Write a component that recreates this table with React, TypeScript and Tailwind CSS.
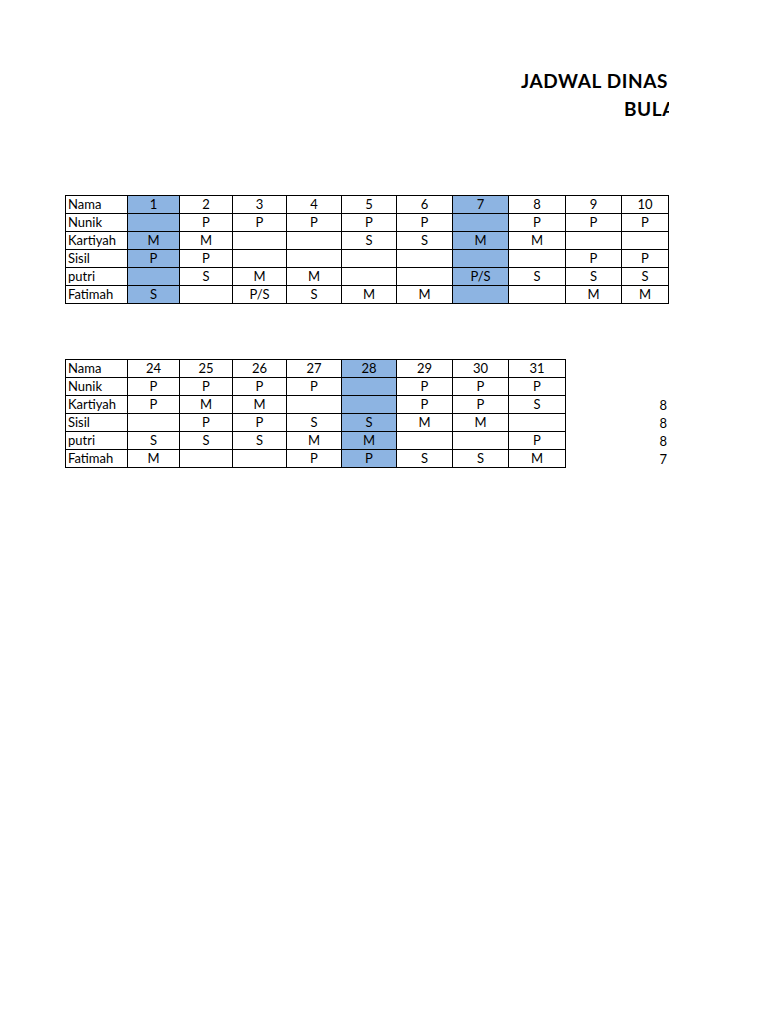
import React from 'react';

type Table = {
  days: string[];
  blue: number[];
  rows: { name: string; cells: string[]; total?: string }[];
};

const first: Table = {
  days: ['1', '2', '3', '4', '5', '6', '7', '8', '9', '10'],
  blue: [0, 6],
  rows: [
    { name: 'Nunik', cells: ['', 'P', 'P', 'P', 'P', 'P', '', 'P', 'P', 'P'] },
    { name: 'Kartiyah', cells: ['M', 'M', '', '', 'S', 'S', 'M', 'M', '', ''] },
    { name: 'Sisil', cells: ['P', 'P', '', '', '', '', '', '', 'P', 'P'] },
    { name: 'putri', cells: ['', 'S', 'M', 'M', '', '', 'P/S', 'S', 'S', 'S'] },
    { name: 'Fatimah', cells: ['S', '', 'P/S', 'S', 'M', 'M', '', '', 'M', 'M'] },
  ],
};

const second: Table = {
  days: ['24', '25', '26', '27', '28', '29', '30', '31'],
  blue: [4],
  rows: [
    { name: 'Nunik', cells: ['P', 'P', 'P', 'P', '', 'P', 'P', 'P'] },
    { name: 'Kartiyah', cells: ['P', 'M', 'M', '', '', 'P', 'P', 'S'], total: '8' },
    { name: 'Sisil', cells: ['', 'P', 'P', 'S', 'S', 'M', 'M', ''], total: '8' },
    { name: 'putri', cells: ['S', 'S', 'S', 'M', 'M', '', '', 'P'], total: '8' },
    { name: 'Fatimah', cells: ['M', '', '', 'P', 'P', 'S', 'S', 'M'], total: '7' },
  ],
};

// widths of the day columns, taken from the gridlines
const dayWidths = [52, 53, 54, 55, 55, 56, 56, 57, 56, 47];

const Cell: React.FC<{ w: number; blue?: boolean; left?: boolean; children?: React.ReactNode }> = ({
  w,
  blue,
  left,
  children,
}) => (
  <div
    style={{ width: w }}
    className={`h-[18px] shrink-0 border-r border-b border-black flex items-center leading-none ${
      left ? 'justify-start pl-[2px]' : 'justify-center'
    } ${blue ? 'bg-[#8db4e2]' : 'bg-white'}`}
  >
    {children}
  </div>
);

const Schedule: React.FC<{ table: Table; extra?: boolean }> = ({ table, extra }) => (
  <div className="flex">
    <div className="border-l border-t border-black">
      <div className="flex">
        <Cell w={62} left>
          Nama
        </Cell>
        {table.days.map((d, i) => (
          <Cell key={d} w={dayWidths[i]} blue={table.blue.includes(i)}>
            {d}
          </Cell>
        ))}
      </div>
      {table.rows.map((row) => (
        <div key={row.name} className="flex">
          <Cell w={62} left>
            {row.name}
          </Cell>
          {row.cells.map((c, i) => (
            <Cell key={i} w={dayWidths[i]} blue={table.blue.includes(i)}>
              {c}
            </Cell>
          ))}
        </div>
      ))}
    </div>
    {extra && (
      <div className="pt-px pl-[56px]">
        <div className="h-[18px]" />
        {table.rows.map((row) => (
          <div key={row.name} className="h-[18px] w-[47px] flex items-center justify-end pr-[2px] leading-none">
            {row.total}
          </div>
        ))}
      </div>
    )}
  </div>
);

export default function App() {
  return (
    <div
      className="w-[669px] overflow-hidden bg-white text-black text-[13px] pb-[500px]"
      style={{ fontFamily: 'Lato, "Open Sans", sans-serif' }}
    >
      <div className="mt-[67px] h-[28px] pl-[521px] text-[19px] tracking-[0.6px] font-bold leading-[28px] whitespace-nowrap">
        JADWAL DINAS
      </div>
      <div className="h-[28px] pl-[624px] text-[19px] tracking-[0.6px] font-bold leading-[28px] whitespace-nowrap">
        BULAN
      </div>
      <div className="mt-[72px] pl-[65px]">
        <Schedule table={first} />
      </div>
      <div className="mt-[55px] pl-[65px]">
        <Schedule table={second} extra />
      </div>
    </div>
  );
}
